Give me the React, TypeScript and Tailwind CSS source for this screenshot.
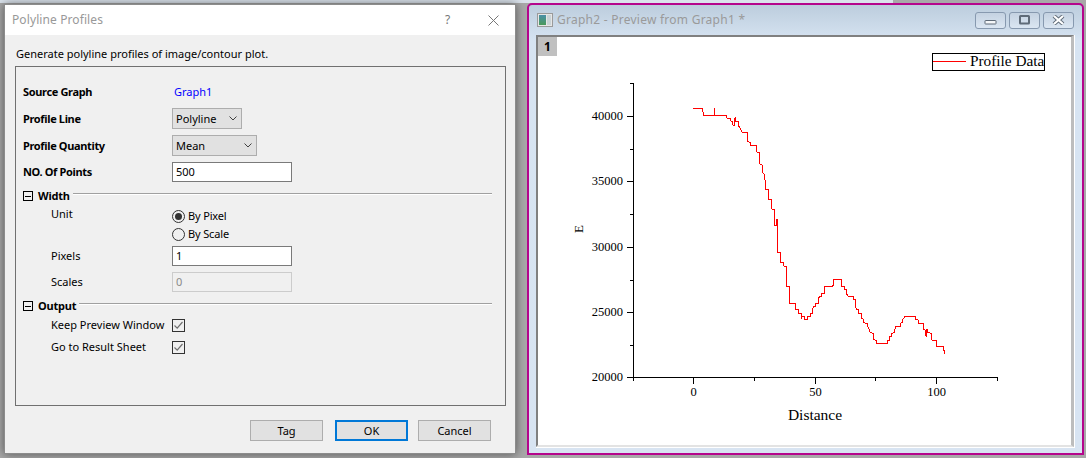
const upper: number[][] = [
  [369, 40], [398, 40], [400, 61], [432, 61], [433, 40], [433, 61], [469, 61], [471, 70], [481, 70], [483, 78], [488, 78],
  [489, 91], [493, 91], [494, 72], [496, 70], [497, 79], [505, 79], [507, 95], [511, 100], [516, 112], [532, 112], [533, 140],
  [541, 142], [541, 150], [558, 150], [560, 171], [568, 172], [570, 207], [577, 210], [578, 232], [584, 240], [587, 283],
  [596, 283], [597, 313], [605, 313], [606, 342], [613, 343], [614, 391], [620, 391], [620, 372], [623, 372], [622, 472],
  [631, 473], [632, 502], [641, 502], [641, 513], [650, 514], [650, 540],
];

const lower: number[][] = [
  [19, 49], [28, 49], [28, 100], [46, 100], [46, 118], [55, 118], [55, 130], [64, 130], [64, 148], [66, 140], [73, 140], [73, 148],
  [82, 148], [82, 139], [91, 139], [91, 130], [97, 130], [97, 120], [100, 110], [106, 110], [106, 100], [115, 100], [115, 90],
  [118, 79], [124, 79], [124, 70], [133, 70], [133, 49], [157, 49], [160, 46], [160, 28], [184, 28], [184, 49], [193, 49],
  [193, 58], [199, 58], [199, 70], [204, 79], [220, 79], [220, 88], [226, 88], [226, 108], [229, 118], [236, 118], [236, 130],
  [244, 130], [244, 145], [250, 148], [250, 158], [262, 160], [264, 170], [268, 178], [271, 188], [280, 190], [280, 208],
  [289, 212], [289, 220], [322, 220], [322, 212], [328, 212], [328, 200], [335, 200], [335, 190], [343, 188], [346, 170],
  [360, 170], [360, 160], [367, 158], [369, 148], [375, 140], [405, 140], [405, 148], [414, 150], [414, 160], [430, 160],
  [430, 178], [436, 180], [436, 197], [438, 180], [439, 200], [441, 178], [444, 188], [454, 190], [454, 210], [469, 211],
  [469, 229], [490, 229], [490, 240], [493, 240], [493, 251],
];

const curve = [
  ...upper.map(([x, y]) => `${570 + x / 3},${95 + y / 3}`),
  ...lower.map(([x, y]) => `${780 + x / 3},${270 + y / 3}`),
].join(" ");

const yMajor = [
  { y: 116.5, label: "40000" },
  { y: 181.5, label: "35000" },
  { y: 247.5, label: "30000" },
  { y: 312.5, label: "25000" },
  { y: 377.5, label: "20000" },
];
const yMinor = [83.5, 149.5, 214.5, 280.5, 345.5];
const xMajor = [
  { x: 693.5, label: "0" },
  { x: 815.5, label: "50" },
  { x: 936.5, label: "100" },
];
const xMinor = [633.5, 754.5, 875.5, 997.5];

function Chevron() {
  return (
    <svg width="8" height="5" viewBox="0 0 8 5" className="ml-auto">
      <polyline points="0.5,0.5 4,4 7.5,0.5" fill="none" stroke="#404040" strokeWidth="1" />
    </svg>
  );
}

function Select({ value, width }: { value: string; width: string }) {
  return (
    <div className={`flex h-[21px] items-center border border-[#adadad] bg-[#e1e1e1] pl-[3px] pr-[4px] ${width}`}>
      <span>{value}</span>
      <Chevron />
    </div>
  );
}

function TextBox({ value, disabled }: { value: string; disabled?: boolean }) {
  return (
    <div
      className={
        disabled
          ? "flex h-[20px] w-[120px] items-center border border-[#cccccc] bg-[#f0f0f0] pb-[2px] pl-[3px] text-[#8a8a8a]"
          : "flex h-[20px] w-[120px] items-center border border-[#7a7a7a] bg-white pb-[2px] pl-[3px]"
      }
    >
      {value}
    </div>
  );
}

function Section({ title, mt }: { title: string; mt: string }) {
  return (
    <div className={`flex h-[14px] items-center pl-[7px] pr-[13px] ${mt}`}>
      <div className="flex h-[10px] w-[10px] items-center justify-center border border-black">
        <div className="h-px w-[6px] bg-black" />
      </div>
      <span className="ml-[5px] pb-[2px] font-bold tracking-[-0.2px]">{title}</span>
      <div className="mb-[4px] ml-[3px] flex-1 border-t border-b border-t-[#a0a0a0] border-b-white" />
    </div>
  );
}

function Check({ label, mt }: { label: string; mt: string }) {
  return (
    <div className={`flex h-[18px] items-center ${mt}`}>
      <div className="w-[156px] pb-[2px] pl-[35px]">{label}</div>
      <div className="flex h-[13px] w-[13px] items-center justify-center border border-[#333333]">
        <svg width="11" height="11" viewBox="0 0 11 11">
          <polyline points="1.5,5.5 4.2,8.2 9.5,2" fill="none" stroke="#707070" strokeWidth="1.2" />
        </svg>
      </div>
    </div>
  );
}

function Radio({ label, on }: { label: string; on?: boolean }) {
  return (
    <div className="flex h-[18px] items-center">
      <div className="flex h-[13px] w-[13px] items-center justify-center rounded-full border border-[#333333]">
        {on && <div className="h-[7px] w-[7px] rounded-full bg-[#333333]" />}
      </div>
      <span className="ml-[3px] pb-[2px] tracking-[-0.15px]">{label}</span>
    </div>
  );
}

function PushButton({ label, primary }: { label: string; primary?: boolean }) {
  return (
    <div
      className={
        primary
          ? "flex h-[21px] w-[73px] items-center justify-center border-2 border-[#0078d7] bg-[#e1e1e1]"
          : "flex h-[21px] w-[73px] items-center justify-center border border-[#adadad] bg-[#e1e1e1]"
      }
    >
      {label}
    </div>
  );
}

function Dialog() {
  return (
    <div className="mt-px flex h-[450px] w-[512px] flex-col border border-[#8c8c8c] bg-[#f0f0f0] text-[11px] leading-none text-black shadow-[0_0_9px_rgba(0,0,0,0.5)]">
      <div className="flex h-[30px] items-center bg-white pl-[7px] text-[12px] tracking-[0.1px] text-[#999999]">
        <span>Polyline Profiles</span>
        <span className="ml-[342px] text-[#777777]">?</span>
        <svg width="11" height="11" viewBox="0 0 11 11" className="ml-[38px]">
          <path d="M0.5 0.5 L10.5 10.5 M10.5 0.5 L0.5 10.5" stroke="#777777" strokeWidth="1" />
        </svg>
      </div>
      <div className="h-[31px] pl-[11px] pt-[13px]">Generate polyline profiles of image/contour plot.</div>
      <div className="ml-[10px] h-[340px] w-[491px] border border-[#707070] pt-[14px]">
        <div className="flex h-[21px] items-center pl-[7px]">
          <div className="w-[151px] font-bold tracking-[-0.35px]">Source Graph</div>
          <span className="mb-px">
            <span className="text-[#0000ff]">Graph1</span>
          </span>
        </div>
        <div className="mt-[6px] flex items-center">
          <div className="w-[156px] pl-[7px] font-bold tracking-[-0.35px]">Profile Line</div>
          <Select value="Polyline" width="w-[70px]" />
        </div>
        <div className="mt-[6px] flex items-center">
          <div className="w-[156px] pl-[7px] font-bold tracking-[-0.35px]">Profile Quantity</div>
          <Select value="Mean" width="w-[85px]" />
        </div>
        <div className="mt-[6px] flex items-center">
          <div className="w-[156px] pb-[2px] pl-[7px] font-bold tracking-[-0.35px]">NO. Of Points</div>
          <TextBox value="500" />
        </div>
        <Section title="Width" mt="mt-[7px]" />
        <div className="mt-[4px] flex">
          <div className="w-[156px] pl-[35px] pt-px">Unit</div>
          <div>
            <Radio label="By Pixel" on />
            <Radio label="By Scale" />
          </div>
        </div>
        <div className="mt-[3px] flex items-center">
          <div className="w-[156px] pb-[2px] pl-[35px]">Pixels</div>
          <TextBox value="1" />
        </div>
        <div className="mt-[6px] flex items-center">
          <div className="w-[156px] pb-[2px] pl-[35px]">Scales</div>
          <TextBox value="0" disabled />
        </div>
        <Section title="Output" mt="mt-[7px]" />
        <Check label="Keep Preview Window" mt="mt-[3px]" />
        <Check label="Go to Result Sheet" mt="mt-[4px]" />
      </div>
      <div className="mt-[14px] flex justify-end pr-[24px]">
        <PushButton label="Tag" />
        <div className="ml-[12px]">
          <PushButton label="OK" primary />
        </div>
        <div className="ml-[10px]">
          <PushButton label="Cancel" />
        </div>
      </div>
    </div>
  );
}

function CaptionButton({ kind }: { kind: "min" | "max" | "close" }) {
  return (
    <div className="flex h-[17px] w-[31px] items-center justify-center rounded-[3px] border border-[#8799af] bg-gradient-to-b from-[#c4d2e1] to-[#dbe6f2]">
      <svg width="13" height="10" viewBox="0 0 13 10">
        {kind === "min" && <rect x="1" y="5.5" width="11" height="3.5" rx="0.5" fill="#f4f6f8" stroke="#5f6b78" />}
        {kind === "max" && (
          <rect x="2" y="1" width="9" height="7.5" rx="0.5" fill="none" stroke="#5f6b78" strokeWidth="2" />
        )}
        {kind === "close" && (
          <>
            <path d="M2 1 L11 9 M11 1 L2 9" stroke="#5f6b78" strokeWidth="4" />
            <path d="M2 1 L11 9 M11 1 L2 9" stroke="#ffffff" strokeWidth="2.2" />
          </>
        )}
      </svg>
    </div>
  );
}

function Plot() {
  return (
    <svg
      viewBox="538 37 533 408"
      className="block h-[408px] w-[533px] font-['Liberation_Serif',serif] text-[12.5px]"
      shapeRendering="crispEdges"
    >
      <rect x="932.5" y="53.5" width="112" height="17" fill="white" stroke="black" />
      <line x1="933" y1="61.5" x2="966" y2="61.5" stroke="#ff0000" />
      <text x="970" y="66" fontSize="15.3">Profile Data</text>

      <line x1="633.5" y1="83" x2="633.5" y2="378" stroke="black" />
      <line x1="627" y1="377.5" x2="998" y2="377.5" stroke="black" />
      {yMajor.map((t) => (
        <g key={t.label}>
          <line x1="627" y1={t.y} x2="633" y2={t.y} stroke="black" />
          <text x="623" y={t.y + 3.5} textAnchor="end">{t.label}</text>
        </g>
      ))}
      {yMinor.map((y) => (
        <line key={y} x1="630" y1={y} x2="633" y2={y} stroke="black" />
      ))}
      {xMajor.map((t) => (
        <g key={t.label}>
          <line x1={t.x} y1="378" x2={t.x} y2="384" stroke="black" />
          <text x={t.x} y="396" textAnchor="middle">{t.label}</text>
        </g>
      ))}
      {xMinor.map((x) => (
        <line key={x} x1={x} y1="378" x2={x} y2="381" stroke="black" />
      ))}
      <text x="815" y="420" textAnchor="middle" fontSize="15.5">Distance</text>
      <text x="583" y="229" textAnchor="middle" fontSize="13" transform="rotate(-90 583 229)">E</text>

      <polyline points={curve} fill="none" stroke="#ff0000" strokeWidth="1" />
    </svg>
  );
}

function GraphWindow() {
  return (
    <div className="ml-[11px] flex h-[452px] w-[557px] flex-col rounded-t-[5px] border-2 border-[#b5058c] bg-gradient-to-b from-[#bccddd] from-0% via-[#d7e4f2] via-8% to-[#d8e4f2]">
      <div className="flex h-[30px] items-center pl-[8px] pr-[8px] font-['Noto_Sans',sans-serif] text-[12px] tracking-[0.25px] text-[#9a9a9a]">
        <svg width="16" height="14" viewBox="0 0 16 14">
          <defs>
            <linearGradient id="thumb" x1="0" y1="0" x2="0" y2="1">
              <stop offset="0" stopColor="#4a8fa8" />
              <stop offset="1" stopColor="#4a9a5a" />
            </linearGradient>
          </defs>
          <rect x="0.5" y="0.5" width="15" height="13" fill="#e6e6e6" stroke="#9a9a9a" />
          <rect x="2" y="2" width="7" height="10" fill="url(#thumb)" />
          <rect x="10" y="2" width="4" height="10" fill="#c9d3d6" />
        </svg>
        <span className="ml-[4px]">Graph2 - Preview from Graph1 *</span>
        <div className="ml-auto flex gap-[3px]">
          <CaptionButton kind="min" />
          <CaptionButton kind="max" />
          <CaptionButton kind="close" />
        </div>
      </div>
      <div className="mx-[7px] border-r border-b border-r-white border-b-white">
        <div className="relative h-[412px] border-t-2 border-r-[3px] border-b-2 border-l-2 border-t-[#808080] border-r-[#bdbdbd] border-b-[#e3e3e3] border-l-[#808080] bg-white">
          <Plot />
          <div className="absolute top-0 left-0 flex h-[19px] w-[19px] items-center justify-center bg-[#c0c0c0] font-['Noto_Sans',sans-serif] text-[12px] font-bold text-black">
            1
          </div>
        </div>
      </div>
    </div>
  );
}

export default function App() {
  return (
    <div className="h-[458px] w-[1086px] overflow-hidden bg-[#a8a8a8] font-['Noto_Sans',sans-serif]">
      <div className="h-[3px] w-[893px] bg-[#dbe3ec]" />
      <div className="flex pl-[4px]">
        <Dialog />
        <GraphWindow />
      </div>
    </div>
  );
}
